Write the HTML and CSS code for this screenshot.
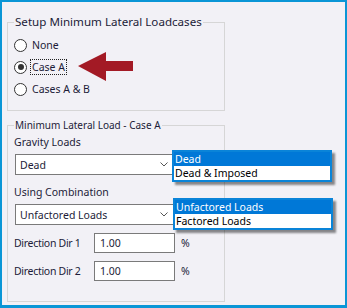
FILE: index.html
```html
<html>
  <head>
    <title>Minimum Lateral Loadcases</title>
    <link rel="stylesheet" href="styles.css">
  </head>
  <body>
    <div id="dialog">
      <fieldset class="group first">
        <legend>Setup Minimum Lateral Loadcases</legend>
        <div class="radio-row">
          <span class="radio"></span>
          <span class="radio-text">None</span>
        </div>
        <div class="radio-row">
          <span class="radio checked"></span>
          <span class="radio-text focus">Case A</span>
          <svg class="arrow" width="56" height="32" viewBox="0 0 56 32">
            <polygon points="1,15 29,1 29,10 56,10 56,20 29,20 29,30" fill="#a31a25"/>
          </svg>
        </div>
        <div class="radio-row">
          <span class="radio"></span>
          <span class="radio-text">Cases A &amp; B</span>
        </div>
      </fieldset>

      <fieldset class="group second">
        <legend>Minimum Lateral Load - Case A</legend>
        <div class="label">Gravity Loads</div>
        <div class="combo">
          <span>Dead</span>
          <svg class="chevron" width="8" height="5" viewBox="0 0 8 5"><polyline points="0.5,0.5 4,4 7.5,0.5" fill="none" stroke="#555" stroke-width="1"/></svg>
        </div>
        <div class="label gap">Using Combination</div>
        <div class="combo">
          <span>Unfactored Loads</span>
          <svg class="chevron" width="8" height="5" viewBox="0 0 8 5"><polyline points="0.5,0.5 4,4 7.5,0.5" fill="none" stroke="#555" stroke-width="1"/></svg>
        </div>
        <div class="field-row">
          <span class="field-label">Direction Dir 1</span>
          <div class="textbox">1.00</div>
          <span class="unit">%</span>
        </div>
        <div class="field-row">
          <span class="field-label">Direction Dir 2</span>
          <div class="textbox">1.00</div>
          <span class="unit">%</span>
        </div>
      </fieldset>

      <div class="dropdown gravity">
        <div class="item selected">Dead</div>
        <div class="item">Dead &amp; Imposed</div>
      </div>
      <div class="dropdown combination">
        <div class="item selected">Unfactored Loads</div>
        <div class="item">Factored Loads</div>
      </div>
    </div>
  </body>
</html>
```

FILE: styles.css
```css
body {
  margin: 0;
  font-family: "Noto Sans", "Open Sans", sans-serif;
  font-size: 10.5px;
  color: #1c1c38;
}
#dialog {
  position: relative;
  width: 338px;
  height: 291px;
  border: 2px solid #0a96d6;
  border-bottom-width: 3px;
  background: #f2f1f6;
  padding: 12px 0 0 5px;
  overflow: hidden;
}
.group {
  width: 218px;
  margin: 0;
  padding: 0 0 0 6px;
  border: 1px solid #d6d6d6;
  box-sizing: border-box;
}
.group legend {
  padding: 0 1px;
  margin-left: 0;
  line-height: 16px;
  height: 16px;
}
.first legend {
  font-size: 11.6px;
}
.second legend {
  font-size: 10px;
}
.first {
  padding-top: 4px;
  padding-bottom: 10px;
}
.second {
  margin-top: 6px;
  padding-bottom: 20px;
}
.radio-row {
  display: flex;
  align-items: center;
  height: 22px;
}
.radio {
  flex: none;
  width: 11px;
  height: 11px;
  border: 1px solid #333;
  border-radius: 50%;
  background: #fff;
  margin-right: 3px;
  position: relative;
}
.radio.checked::after {
  content: "";
  position: absolute;
  left: 2.5px;
  top: 2.5px;
  width: 6px;
  height: 6px;
  border-radius: 50%;
  background: #333;
}
.radio-text {
  padding: 0 1px;
  line-height: 14px;
  border: 1px solid transparent;
}
.radio-text.focus {
  border: 1px dotted #222;
}
.arrow {
  margin-left: 10px;
}
.label {
  line-height: 16px;
  margin-top: 1px;
}
.label.gap {
  margin-top: 9px;
}
.combo {
  display: flex;
  align-items: center;
  justify-content: space-between;
  width: 160px;
  height: 21px;
  margin: 4px 0 0 1px;
  padding: 0 6px 0 4px;
  border: 1px solid #7a7a7a;
  background: #fff;
  box-sizing: border-box;
}
.field-row {
  display: flex;
  align-items: center;
  margin-top: 8px;
}
.field-label {
  flex: none;
  width: 80px;
  white-space: nowrap;
  letter-spacing: -0.3px;
}
.textbox {
  flex: none;
  width: 81px;
  height: 20px;
  line-height: 18px;
  padding-left: 5px;
  border: 1px solid #7a7a7a;
  background: #fff;
  box-sizing: border-box;
}
.unit {
  margin-left: 6px;
}
.dropdown {
  position: absolute;
  width: 160px;
  border: 2px solid #0a84d8;
  background: #fff;
  color: #000;
  box-sizing: border-box;
  box-shadow: 3px 3px 2px rgba(0, 0, 0, 0.45);
}
.gravity {
  left: 170px;
  top: 148px;
}
.combination {
  left: 171px;
  top: 196px;
}
.item {
  height: 14px;
  line-height: 14px;
  padding-left: 1px;
}
.item.selected {
  background: #0078d7;
  color: #fff;
}
```
